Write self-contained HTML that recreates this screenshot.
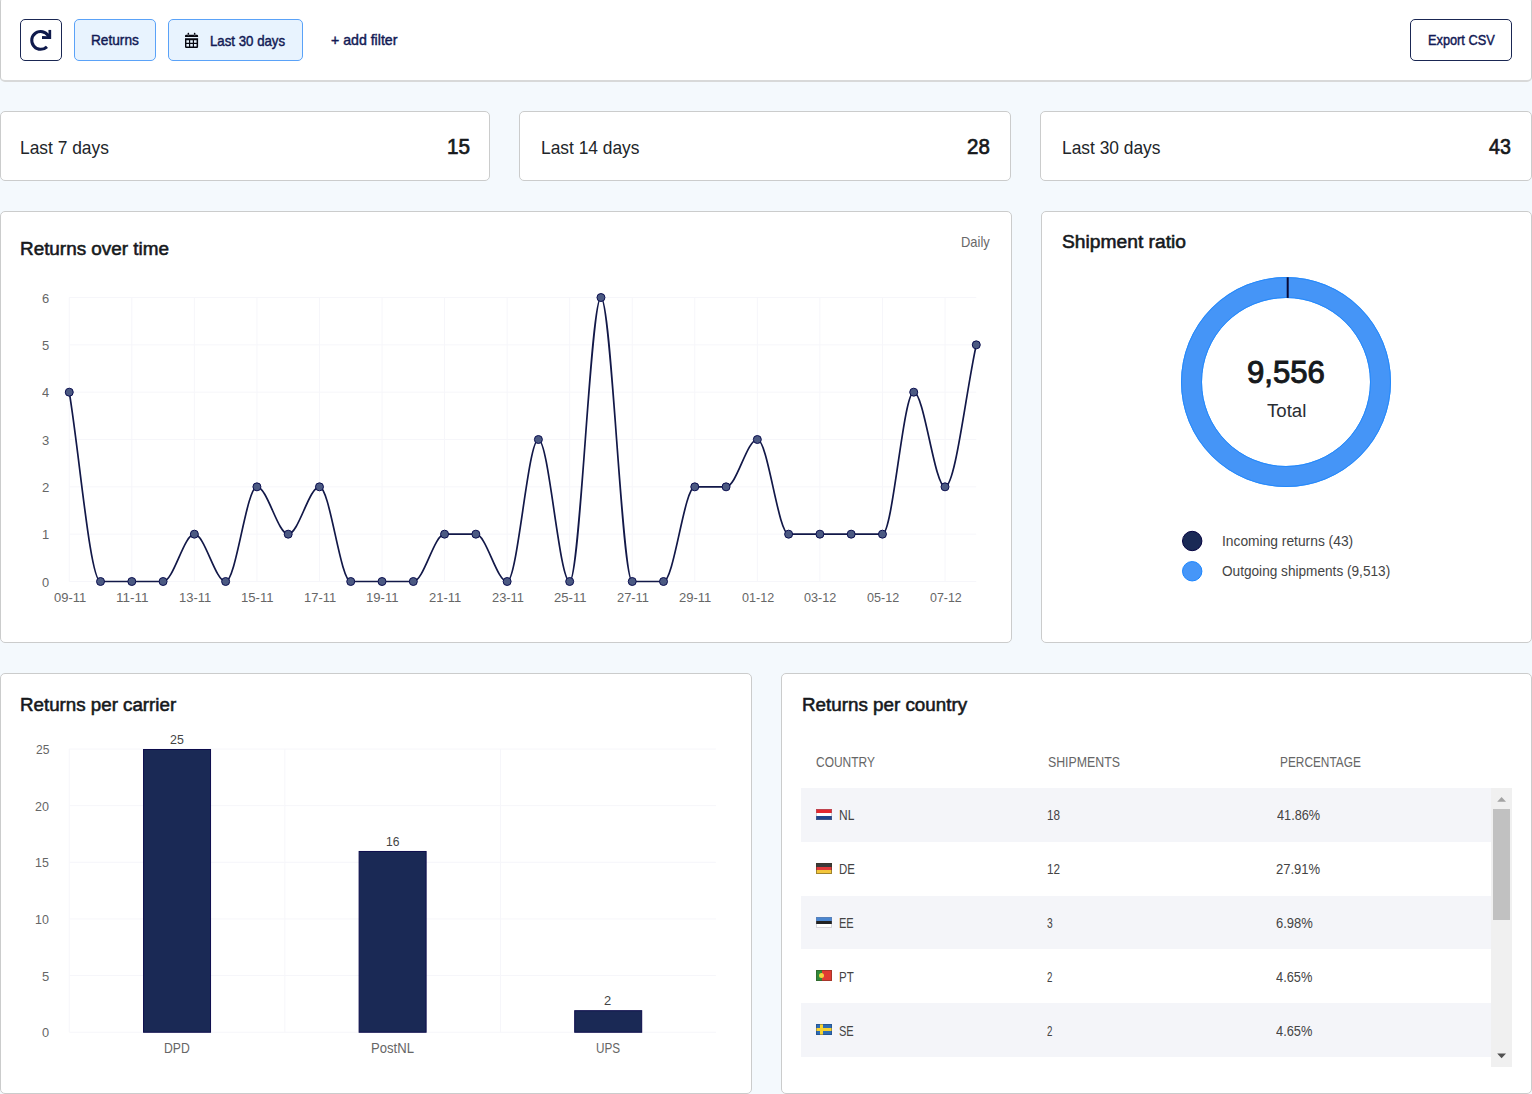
<!DOCTYPE html><html><head><meta charset="utf-8"><title>Returns analytics</title><style>
*{box-sizing:border-box}
html,body{margin:0;padding:0}
body{width:1532px;height:1094px;overflow:hidden;background:#f4f9fd;font-family:"Liberation Sans",sans-serif;position:relative}
#page{position:absolute;left:0;top:0;width:1532px;height:1094px;overflow:hidden;background:#f4f9fd}
.card{position:absolute;background:#fff;border:1px solid #cbcccc;border-radius:5px}
.btn{position:absolute;top:19px;height:42px;border-radius:5px;border:1px solid #1a2753;background:#fff}
.btn.f{border-color:#5aa2f8;background:#e8f3fe}
.t{position:absolute;white-space:pre;line-height:60px;transform-origin:0 50%}
.row{position:absolute;left:801px;width:690px;height:53.8px;background:#f4f5f9}
.flag{position:absolute;left:816px;width:16px;height:11px;overflow:hidden}
svg#g{position:absolute;left:0;top:0}
</style></head><body><div id="page">
<div class="card" style="left:0;top:-3px;width:1531.5px;height:85px;border-bottom:2px solid #d8d9d9"></div>
<div class="card" style="left:0px;top:111px;width:490px;height:70px"></div>
<div class="card" style="left:519px;top:111px;width:492px;height:70px"></div>
<div class="card" style="left:1040px;top:111px;width:491.5px;height:70px"></div>
<div class="card" style="left:0px;top:211px;width:1012px;height:432px"></div>
<div class="card" style="left:1041px;top:211px;width:490.5px;height:432px"></div>
<div class="card" style="left:0px;top:673px;width:751.5px;height:421px"></div>
<div class="card" style="left:781px;top:673px;width:750.5px;height:421px"></div>
<div class="btn" style="left:20px;width:42px"></div>
<div class="btn f" style="left:74px;width:82.25px"></div>
<div class="btn f" style="left:168px;width:135px"></div>
<div class="btn" style="left:1410px;width:102px"></div>
<div class="row" style="top:788.0px"></div>
<div class="row" style="top:895.6px"></div>
<div class="row" style="top:1003.2px"></div>
<div style="position:absolute;left:1491px;top:788px;width:21px;height:279px;background:#f0f0f0"></div>
<div style="position:absolute;left:1493px;top:808.75px;width:16.75px;height:111.25px;background:#c1c1c1"></div>
<div class="flag" style="top:809px"><div style="position:absolute;left:0;width:16px;top:0.00px;height:3.67px;background:#e3292e"></div><div style="position:absolute;left:0;width:16px;top:3.67px;height:3.67px;background:#ffffff"></div><div style="position:absolute;left:0;width:16px;top:7.33px;height:3.67px;background:#21468b"></div><div style="position:absolute;inset:0;border:1px solid rgba(120,120,140,.35)"></div></div>
<div class="flag" style="top:863px"><div style="position:absolute;left:0;width:16px;top:0.00px;height:3.67px;background:#3a3a3a"></div><div style="position:absolute;left:0;width:16px;top:3.67px;height:3.67px;background:#e0393a"></div><div style="position:absolute;left:0;width:16px;top:7.33px;height:3.67px;background:#f3c63b"></div><div style="position:absolute;inset:0;border:1px solid rgba(60,50,30,.45)"></div></div>
<div class="flag" style="top:917px"><div style="position:absolute;left:0;width:16px;top:0.00px;height:3.67px;background:#4a86d0"></div><div style="position:absolute;left:0;width:16px;top:3.67px;height:3.67px;background:#222"></div><div style="position:absolute;left:0;width:16px;top:7.33px;height:3.67px;background:#ffffff"></div><div style="position:absolute;inset:0;border:1px solid rgba(120,120,140,.3)"></div></div>
<div class="flag" style="top:970px"><div style="position:absolute;left:0;top:0;width:6px;height:11px;background:#2f8a3a"></div><div style="position:absolute;left:6px;top:0;width:10px;height:11px;background:#e03a32"></div><div style="position:absolute;left:3px;top:3px;width:5px;height:5px;border-radius:50%;background:#f3d33e"></div><div style="position:absolute;inset:0;border:1px solid rgba(60,50,30,.35)"></div></div>
<div class="flag" style="top:1024px"><div style="position:absolute;inset:0;background:#2d6cb5"></div><div style="position:absolute;left:4px;top:0;width:3px;height:11px;background:#f7d231"></div><div style="position:absolute;left:0;top:4px;width:16px;height:3px;background:#f7d231"></div><div style="position:absolute;inset:0;border:1px solid rgba(30,50,90,.35)"></div></div>
<svg id="g" width="1532" height="1094" viewBox="0 0 1532 1094">
<line x1="69.25" x2="976.28" y1="581.50" y2="581.50" stroke="#f6f6fa" stroke-width="1"/>
<line x1="69.25" x2="976.28" y1="534.17" y2="534.17" stroke="#f6f6fa" stroke-width="1"/>
<line x1="69.25" x2="976.28" y1="486.84" y2="486.84" stroke="#f6f6fa" stroke-width="1"/>
<line x1="69.25" x2="976.28" y1="439.51" y2="439.51" stroke="#f6f6fa" stroke-width="1"/>
<line x1="69.25" x2="976.28" y1="392.18" y2="392.18" stroke="#f6f6fa" stroke-width="1"/>
<line x1="69.25" x2="976.28" y1="344.85" y2="344.85" stroke="#f6f6fa" stroke-width="1"/>
<line x1="69.25" x2="976.28" y1="297.52" y2="297.52" stroke="#f6f6fa" stroke-width="1"/>
<line x1="69.25" x2="69.25" y1="297.52" y2="581.50" stroke="#f6f6fa" stroke-width="1"/>
<line x1="131.80" x2="131.80" y1="297.52" y2="581.50" stroke="#f6f6fa" stroke-width="1"/>
<line x1="194.36" x2="194.36" y1="297.52" y2="581.50" stroke="#f6f6fa" stroke-width="1"/>
<line x1="256.91" x2="256.91" y1="297.52" y2="581.50" stroke="#f6f6fa" stroke-width="1"/>
<line x1="319.47" x2="319.47" y1="297.52" y2="581.50" stroke="#f6f6fa" stroke-width="1"/>
<line x1="382.02" x2="382.02" y1="297.52" y2="581.50" stroke="#f6f6fa" stroke-width="1"/>
<line x1="444.57" x2="444.57" y1="297.52" y2="581.50" stroke="#f6f6fa" stroke-width="1"/>
<line x1="507.13" x2="507.13" y1="297.52" y2="581.50" stroke="#f6f6fa" stroke-width="1"/>
<line x1="569.68" x2="569.68" y1="297.52" y2="581.50" stroke="#f6f6fa" stroke-width="1"/>
<line x1="632.24" x2="632.24" y1="297.52" y2="581.50" stroke="#f6f6fa" stroke-width="1"/>
<line x1="694.79" x2="694.79" y1="297.52" y2="581.50" stroke="#f6f6fa" stroke-width="1"/>
<line x1="757.34" x2="757.34" y1="297.52" y2="581.50" stroke="#f6f6fa" stroke-width="1"/>
<line x1="819.90" x2="819.90" y1="297.52" y2="581.50" stroke="#f6f6fa" stroke-width="1"/>
<line x1="882.45" x2="882.45" y1="297.52" y2="581.50" stroke="#f6f6fa" stroke-width="1"/>
<line x1="945.01" x2="945.01" y1="297.52" y2="581.50" stroke="#f6f6fa" stroke-width="1"/>
<path d="M69.25,392.18C79.68,455.29 90.10,581.50 100.53,581.50C110.95,581.50 121.38,581.50 131.80,581.50C142.23,581.50 152.66,581.50 163.08,581.50C173.51,581.50 183.93,534.17 194.36,534.17C204.78,534.17 215.21,581.50 225.63,581.50C236.06,581.50 246.49,486.84 256.91,486.84C267.34,486.84 277.76,534.17 288.19,534.17C298.61,534.17 309.04,486.84 319.47,486.84C329.89,486.84 340.32,581.50 350.74,581.50C361.17,581.50 371.59,581.50 382.02,581.50C392.45,581.50 402.87,581.50 413.30,581.50C423.72,581.50 434.15,534.17 444.57,534.17C455.00,534.17 465.43,534.17 475.85,534.17C486.28,534.17 496.70,581.50 507.13,581.50C517.55,581.50 527.98,439.51 538.40,439.51C548.83,439.51 559.26,581.50 569.68,581.50C580.11,581.50 590.53,297.52 600.96,297.52C611.38,297.52 621.81,581.50 632.24,581.50C642.66,581.50 653.09,581.50 663.51,581.50C673.94,581.50 684.36,486.84 694.79,486.84C705.22,486.84 715.64,486.84 726.07,486.84C736.49,486.84 746.92,439.51 757.34,439.51C767.77,439.51 778.20,534.17 788.62,534.17C799.05,534.17 809.47,534.17 819.90,534.17C830.32,534.17 840.75,534.17 851.18,534.17C861.60,534.17 872.03,534.17 882.45,534.17C892.88,534.17 903.30,392.18 913.73,392.18C924.15,392.18 934.58,486.84 945.01,486.84C955.43,486.84 965.86,392.18 976.28,344.85" fill="none" stroke="#121848" stroke-width="1.7" stroke-linejoin="round"/>
<circle cx="69.25" cy="392.18" r="4" fill="#4b5982" stroke="#0b0f50" stroke-width="1"/>
<circle cx="100.53" cy="581.50" r="4" fill="#4b5982" stroke="#0b0f50" stroke-width="1"/>
<circle cx="131.80" cy="581.50" r="4" fill="#4b5982" stroke="#0b0f50" stroke-width="1"/>
<circle cx="163.08" cy="581.50" r="4" fill="#4b5982" stroke="#0b0f50" stroke-width="1"/>
<circle cx="194.36" cy="534.17" r="4" fill="#4b5982" stroke="#0b0f50" stroke-width="1"/>
<circle cx="225.63" cy="581.50" r="4" fill="#4b5982" stroke="#0b0f50" stroke-width="1"/>
<circle cx="256.91" cy="486.84" r="4" fill="#4b5982" stroke="#0b0f50" stroke-width="1"/>
<circle cx="288.19" cy="534.17" r="4" fill="#4b5982" stroke="#0b0f50" stroke-width="1"/>
<circle cx="319.47" cy="486.84" r="4" fill="#4b5982" stroke="#0b0f50" stroke-width="1"/>
<circle cx="350.74" cy="581.50" r="4" fill="#4b5982" stroke="#0b0f50" stroke-width="1"/>
<circle cx="382.02" cy="581.50" r="4" fill="#4b5982" stroke="#0b0f50" stroke-width="1"/>
<circle cx="413.30" cy="581.50" r="4" fill="#4b5982" stroke="#0b0f50" stroke-width="1"/>
<circle cx="444.57" cy="534.17" r="4" fill="#4b5982" stroke="#0b0f50" stroke-width="1"/>
<circle cx="475.85" cy="534.17" r="4" fill="#4b5982" stroke="#0b0f50" stroke-width="1"/>
<circle cx="507.13" cy="581.50" r="4" fill="#4b5982" stroke="#0b0f50" stroke-width="1"/>
<circle cx="538.40" cy="439.51" r="4" fill="#4b5982" stroke="#0b0f50" stroke-width="1"/>
<circle cx="569.68" cy="581.50" r="4" fill="#4b5982" stroke="#0b0f50" stroke-width="1"/>
<circle cx="600.96" cy="297.52" r="4" fill="#4b5982" stroke="#0b0f50" stroke-width="1"/>
<circle cx="632.24" cy="581.50" r="4" fill="#4b5982" stroke="#0b0f50" stroke-width="1"/>
<circle cx="663.51" cy="581.50" r="4" fill="#4b5982" stroke="#0b0f50" stroke-width="1"/>
<circle cx="694.79" cy="486.84" r="4" fill="#4b5982" stroke="#0b0f50" stroke-width="1"/>
<circle cx="726.07" cy="486.84" r="4" fill="#4b5982" stroke="#0b0f50" stroke-width="1"/>
<circle cx="757.34" cy="439.51" r="4" fill="#4b5982" stroke="#0b0f50" stroke-width="1"/>
<circle cx="788.62" cy="534.17" r="4" fill="#4b5982" stroke="#0b0f50" stroke-width="1"/>
<circle cx="819.90" cy="534.17" r="4" fill="#4b5982" stroke="#0b0f50" stroke-width="1"/>
<circle cx="851.18" cy="534.17" r="4" fill="#4b5982" stroke="#0b0f50" stroke-width="1"/>
<circle cx="882.45" cy="534.17" r="4" fill="#4b5982" stroke="#0b0f50" stroke-width="1"/>
<circle cx="913.73" cy="392.18" r="4" fill="#4b5982" stroke="#0b0f50" stroke-width="1"/>
<circle cx="945.01" cy="486.84" r="4" fill="#4b5982" stroke="#0b0f50" stroke-width="1"/>
<circle cx="976.28" cy="344.85" r="4" fill="#4b5982" stroke="#0b0f50" stroke-width="1"/>
<line x1="69.25" x2="715.99" y1="1032.25" y2="1032.25" stroke="#f6f6fa" stroke-width="1"/>
<line x1="69.25" x2="715.99" y1="975.60" y2="975.60" stroke="#f6f6fa" stroke-width="1"/>
<line x1="69.25" x2="715.99" y1="918.95" y2="918.95" stroke="#f6f6fa" stroke-width="1"/>
<line x1="69.25" x2="715.99" y1="862.30" y2="862.30" stroke="#f6f6fa" stroke-width="1"/>
<line x1="69.25" x2="715.99" y1="805.65" y2="805.65" stroke="#f6f6fa" stroke-width="1"/>
<line x1="69.25" x2="715.99" y1="749.00" y2="749.00" stroke="#f6f6fa" stroke-width="1"/>
<line x1="69.25" x2="69.25" y1="749.00" y2="1032.25" stroke="#f6f6fa" stroke-width="1"/>
<line x1="284.83" x2="284.83" y1="749.00" y2="1032.25" stroke="#f6f6fa" stroke-width="1"/>
<line x1="500.41" x2="500.41" y1="749.00" y2="1032.25" stroke="#f6f6fa" stroke-width="1"/>
<rect x="143.54" y="749.50" width="67" height="282.75" fill="#1a2955" stroke="#0c0c4c" stroke-width="1"/>
<rect x="359.12" y="851.47" width="67" height="180.78" fill="#1a2955" stroke="#0c0c4c" stroke-width="1"/>
<rect x="574.70" y="1010.69" width="67" height="21.56" fill="#1a2955" stroke="#0c0c4c" stroke-width="1"/>
<circle cx="1286" cy="382" r="94.5" fill="none" stroke="#4595f7" stroke-width="21"/>
<circle cx="1286" cy="382" r="104.5" fill="none" stroke="#2389fc" stroke-width="1"/>
<circle cx="1286" cy="382" r="84.5" fill="none" stroke="#2389fc" stroke-width="1"/>
<rect x="1286.7" y="277.3" width="2" height="20.6" fill="#0a0a36"/>
<circle cx="1192.2" cy="541" r="9.7" fill="#1a2a56" stroke="#02003f" stroke-width="1"/>
<circle cx="1192.2" cy="571.25" r="9.7" fill="#4696f8" stroke="#1a85ff" stroke-width="1"/>
<svg x="29.9" y="29.7" width="21.5" height="21.5" viewBox="0 0 512 512"><path fill="#0f1a4c" d="M500.33 0h-47.41a12 12 0 0 0-12 12.57l4 82.76A247.42 247.42 0 0 0 256 8C119.34 8 7.9 119.53 8 256.19 8.1 393.07 119.1 504 256 504a247.1 247.1 0 0 0 166.18-63.91 12 12 0 0 0 .48-17.43l-34-34a12 12 0 0 0-16.38-.55A176 176 0 1 1 402.1 157.8l-101.53-4.87a12 12 0 0 0-12.57 12v47.41a12 12 0 0 0 12 12h200.33a12 12 0 0 0 12-12V12a12 12 0 0 0-12-12z"/></svg>
<path fill="#05060f" fill-rule="evenodd" d="M185,36 a1.2,1.2 0 0 1 1.2,-1.2 h10.7 a1.2,1.2 0 0 1 1.2,1.2 v0.9 h-13.1 z M187.6,33.2 a0.5,0.5 0 0 1 .5,-.5 h.5 a.5,.5 0 0 1 .5,.5 v2 h-1.5 z M193.9,33.2 a0.5,0.5 0 0 1 .5,-.5 h.5 a.5,.5 0 0 1 .5,.5 v2 h-1.5 z M185,38.3 h13.1 v8.4 a1.2,1.2 0 0 1 -1.2,1.2 h-10.7 a1.2,1.2 0 0 1 -1.2,-1.2 z M186.4,40.2 h2.6 v2.5 h-2.6 z M190.2,40.2 h2.6 v2.5 h-2.6 z M194.0,40.2 h2.6 v2.5 h-2.6 z M186.4,44.0 h2.6 v2.5 h-2.6 z M190.2,44.0 h2.6 v2.5 h-2.6 z M194.0,44.0 h2.6 v2.5 h-2.6 z"/>
<path d="M1497.2,801.8 L1501.6,797 L1506,801.8 Z" fill="#a3a3a3"/>
<path d="M1497.2,1053.4 L1506,1053.4 L1501.6,1058.2 Z" fill="#505050"/>
</svg>
<span class="t" style="left:91.06px;top:10px;font-size:14.5px;color:#121a55;transform:scaleX(0.9425);-webkit-text-stroke:0.45px #121a55">Returns</span>
<span class="t" style="left:210.38px;top:11px;font-size:14.5px;color:#121a55;transform:scaleX(0.9136);-webkit-text-stroke:0.45px #121a55">Last 30 days</span>
<span class="t" style="left:330.66px;top:10px;font-size:14.5px;color:#121a55;transform:scaleX(0.9748);-webkit-text-stroke:0.45px #121a55">+ add filter</span>
<span class="t" style="left:1427.75px;top:10px;font-size:14.5px;color:#121a55;transform:scaleX(0.8811);-webkit-text-stroke:0.45px #121a55">Export CSV</span>
<span class="t" style="left:20.23px;top:118px;font-size:19px;color:#212529;transform:scaleX(0.9147)">Last 7 days</span>
<span class="t" style="left:540.79px;top:118px;font-size:19px;color:#212529;transform:scaleX(0.9139)">Last 14 days</span>
<span class="t" style="left:1061.79px;top:118px;font-size:19px;color:#212529;transform:scaleX(0.9139)">Last 30 days</span>
<span class="t" style="left:446.75px;top:117px;font-size:22px;color:#16191c;transform:scaleX(0.9412);-webkit-text-stroke:0.7px #16191c">15</span>
<span class="t" style="left:967.04px;top:117px;font-size:22px;color:#16191c;transform:scaleX(0.9314);-webkit-text-stroke:0.7px #16191c">28</span>
<span class="t" style="left:1488.81px;top:117px;font-size:22px;color:#16191c;transform:scaleX(0.8893);-webkit-text-stroke:0.7px #16191c">43</span>
<span class="t" style="left:19.80px;top:219px;font-size:18px;color:#16191c;transform:scaleX(1.0486);-webkit-text-stroke:0.55px #16191c">Returns over time</span>
<span class="t" style="left:961.17px;top:212px;font-size:15px;color:#686868;transform:scaleX(0.8612)">Daily</span>
<span class="t" style="left:1062.18px;top:212px;font-size:18px;color:#16191c;transform:scaleX(1.0681);-webkit-text-stroke:0.55px #16191c">Shipment ratio</span>
<span class="t" style="left:20.13px;top:675px;font-size:18px;color:#16191c;transform:scaleX(1.0407);-webkit-text-stroke:0.55px #16191c">Returns per carrier</span>
<span class="t" style="left:801.75px;top:675px;font-size:18px;color:#16191c;transform:scaleX(1.0442);-webkit-text-stroke:0.55px #16191c">Returns per country</span>
<span class="t" style="left:1246.83px;top:342px;font-size:30.5px;color:#16191c;transform:scaleX(1.0193);-webkit-text-stroke:1.0px #16191c">9,556</span>
<span class="t" style="left:1266.66px;top:381px;font-size:18px;color:#2a2e33;transform:scaleX(1.0344)">Total</span>
<span class="t" style="left:1222.30px;top:511px;font-size:14.5px;color:#444;transform:scaleX(0.9517)">Incoming returns (43)</span>
<span class="t" style="left:1222.01px;top:541px;font-size:14.5px;color:#444;transform:scaleX(0.9398)">Outgoing shipments (9,513)</span>
<span class="t" style="left:42.31px;top:553px;font-size:13px;color:#666;transform:scaleX(0.9848)">0</span>
<span class="t" style="left:42.26px;top:505px;font-size:13px;color:#666;transform:scaleX(0.9945)">1</span>
<span class="t" style="left:42.29px;top:458px;font-size:13px;color:#666;transform:scaleX(1.0135)">2</span>
<span class="t" style="left:42.19px;top:411px;font-size:13px;color:#666;transform:scaleX(0.9979)">3</span>
<span class="t" style="left:41.53px;top:363px;font-size:13px;color:#666;transform:scaleX(0.9895)">4</span>
<span class="t" style="left:42.24px;top:316px;font-size:13px;color:#666;transform:scaleX(1.0023)">5</span>
<span class="t" style="left:42.34px;top:269px;font-size:13px;color:#666;transform:scaleX(0.9956)">6</span>
<span class="t" style="left:53.50px;top:568px;font-size:13px;color:#666;transform:scaleX(0.9985)">09-11</span>
<span class="t" style="left:116.17px;top:568px;font-size:13px;color:#666;transform:scaleX(1.0420)">11-11</span>
<span class="t" style="left:178.73px;top:568px;font-size:13px;color:#666;transform:scaleX(0.9955)">13-11</span>
<span class="t" style="left:240.74px;top:568px;font-size:13px;color:#666;transform:scaleX(1.0061)">15-11</span>
<span class="t" style="left:303.83px;top:568px;font-size:13px;color:#666;transform:scaleX(0.9955)">17-11</span>
<span class="t" style="left:366.17px;top:568px;font-size:13px;color:#666;transform:scaleX(1.0061)">19-11</span>
<span class="t" style="left:429.29px;top:568px;font-size:13px;color:#666;transform:scaleX(0.9996)">21-11</span>
<span class="t" style="left:491.70px;top:568px;font-size:13px;color:#666;transform:scaleX(0.9890)">23-11</span>
<span class="t" style="left:554.41px;top:568px;font-size:13px;color:#666;transform:scaleX(1.0049)">25-11</span>
<span class="t" style="left:616.81px;top:568px;font-size:13px;color:#666;transform:scaleX(0.9890)">27-11</span>
<span class="t" style="left:679.16px;top:568px;font-size:13px;color:#666;transform:scaleX(0.9996)">29-11</span>
<span class="t" style="left:741.77px;top:568px;font-size:13px;color:#666;transform:scaleX(0.9675)">01-12</span>
<span class="t" style="left:804.11px;top:568px;font-size:13px;color:#666;transform:scaleX(0.9723)">03-12</span>
<span class="t" style="left:867.20px;top:568px;font-size:13px;color:#666;transform:scaleX(0.9675)">05-12</span>
<span class="t" style="left:929.70px;top:568px;font-size:13px;color:#666;transform:scaleX(0.9556)">07-12</span>
<span class="t" style="left:42.31px;top:1003px;font-size:13px;color:#666;transform:scaleX(0.9848)">0</span>
<span class="t" style="left:42.24px;top:947px;font-size:13px;color:#666;transform:scaleX(1.0023)">5</span>
<span class="t" style="left:35.01px;top:890px;font-size:13px;color:#666;transform:scaleX(0.9571)">10</span>
<span class="t" style="left:35.10px;top:833px;font-size:13px;color:#666;transform:scaleX(0.9547)">15</span>
<span class="t" style="left:34.99px;top:777px;font-size:13px;color:#666;transform:scaleX(0.9646)">20</span>
<span class="t" style="left:35.64px;top:720px;font-size:13px;color:#666;transform:scaleX(0.9300)">25</span>
<span class="t" style="left:170.34px;top:710px;font-size:13px;color:#444;transform:scaleX(0.9519)">25</span>
<span class="t" style="left:385.93px;top:812px;font-size:13px;color:#444;transform:scaleX(0.9300)">16</span>
<span class="t" style="left:604.27px;top:971px;font-size:13px;color:#444;transform:scaleX(0.9939)">2</span>
<span class="t" style="left:164.18px;top:1018px;font-size:14.5px;color:#666;transform:scaleX(0.8396)">DPD</span>
<span class="t" style="left:370.54px;top:1018px;font-size:14.5px;color:#666;transform:scaleX(0.9025)">PostNL</span>
<span class="t" style="left:595.99px;top:1018px;font-size:14.5px;color:#666;transform:scaleX(0.8099)">UPS</span>
<span class="t" style="left:815.74px;top:732px;font-size:14.5px;color:#666;transform:scaleX(0.8238)">COUNTRY</span>
<span class="t" style="left:1048.29px;top:732px;font-size:14.5px;color:#666;transform:scaleX(0.8496)">SHIPMENTS</span>
<span class="t" style="left:1280.22px;top:732px;font-size:14.5px;color:#666;transform:scaleX(0.8177)">PERCENTAGE</span>
<span class="t" style="left:839.21px;top:785px;font-size:14.5px;color:#444;transform:scaleX(0.8251)">NL</span>
<span class="t" style="left:1046.75px;top:785px;font-size:14.5px;color:#444;transform:scaleX(0.8081)">18</span>
<span class="t" style="left:1276.76px;top:785px;font-size:14.5px;color:#444;transform:scaleX(0.8768)">41.86%</span>
<span class="t" style="left:839.06px;top:839px;font-size:14.5px;color:#444;transform:scaleX(0.7887)">DE</span>
<span class="t" style="left:1046.74px;top:839px;font-size:14.5px;color:#444;transform:scaleX(0.8109)">12</span>
<span class="t" style="left:1276.02px;top:839px;font-size:14.5px;color:#444;transform:scaleX(0.8990)">27.91%</span>
<span class="t" style="left:839.42px;top:893px;font-size:14.5px;color:#444;transform:scaleX(0.7612)">EE</span>
<span class="t" style="left:1046.73px;top:893px;font-size:14.5px;color:#444;transform:scaleX(0.7071)">3</span>
<span class="t" style="left:1276.04px;top:893px;font-size:14.5px;color:#444;transform:scaleX(0.8959)">6.98%</span>
<span class="t" style="left:839.34px;top:947px;font-size:14.5px;color:#444;transform:scaleX(0.7964)">PT</span>
<span class="t" style="left:1046.76px;top:947px;font-size:14.5px;color:#444;transform:scaleX(0.6726)">2</span>
<span class="t" style="left:1276.24px;top:947px;font-size:14.5px;color:#444;transform:scaleX(0.8837)">4.65%</span>
<span class="t" style="left:839.48px;top:1001px;font-size:14.5px;color:#444;transform:scaleX(0.7616)">SE</span>
<span class="t" style="left:1046.76px;top:1001px;font-size:14.5px;color:#444;transform:scaleX(0.6726)">2</span>
<span class="t" style="left:1276.24px;top:1001px;font-size:14.5px;color:#444;transform:scaleX(0.8837)">4.65%</span>
</div></body></html>
